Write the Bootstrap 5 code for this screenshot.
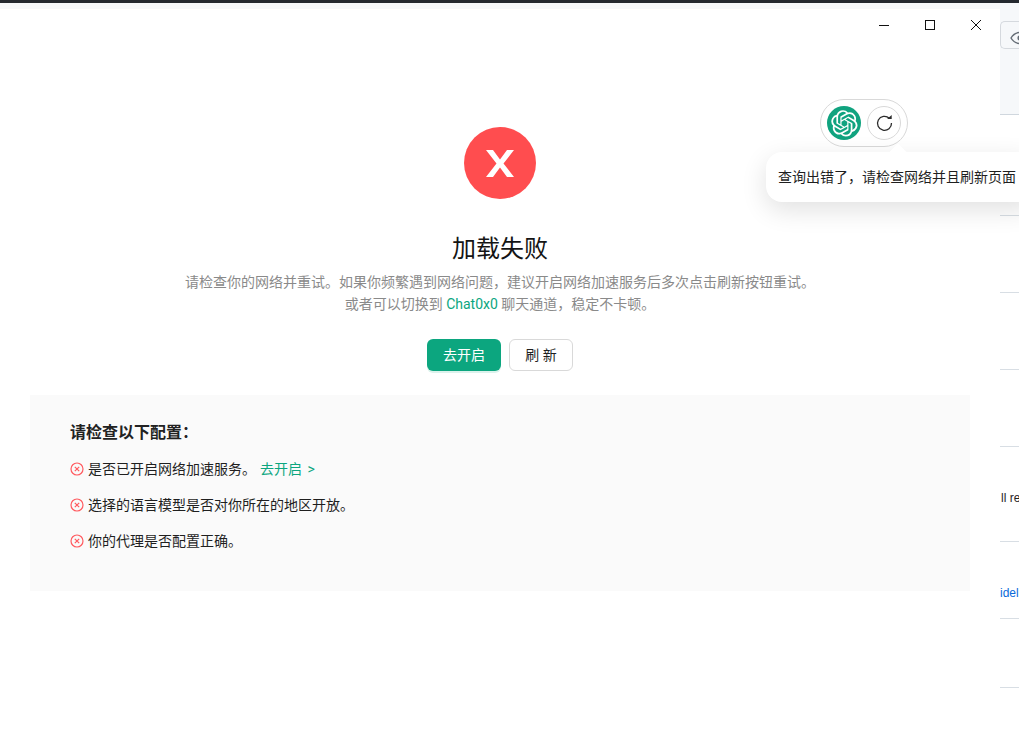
<!doctype html>
<html lang="zh"><head><meta charset="utf-8"><title>加载失败</title>
<link href="https://cdn.jsdelivr.net/npm/bootstrap@5.3.0/dist/css/bootstrap.min.css" rel="stylesheet">
<style>
html,body{height:729px;overflow:hidden}
body{font-family:Roboto,"Noto Sans CJK SC",sans-serif;background:#fff;color:#1f2328;position:relative}
.topline{height:3px;background:#24292f}
.stage{height:726px;background:#f6f8fa}
.dlg{width:1000px;margin-top:6px;height:720px;background:#fff;position:relative;z-index:1}
.rail{flex:1;background:#fff;position:relative;overflow:hidden;font-size:12px;font-family:"Liberation Sans",sans-serif}
.rail-head{height:112px;background:#f6f8fa;border-bottom:1px solid #d0d7de;padding-top:18px}
.eye{width:40px;height:28px;border:1px solid #d5d9de;border-radius:5px 0 0 5px;background:#f6f8fa;padding:6px 0 0 9px;border-right:0}
.rrow{border-bottom:1px solid #d8dee4;white-space:nowrap;display:flex;align-items:flex-end}
.r1{height:101px}.r2{height:77px}.r3{height:77px}.r4{height:77px}.r5{height:95px;padding-bottom:34px;padding-left:1px}.r6{height:77px;padding-bottom:16px;color:#0969da}.r7{height:69px}
.winbar{height:32px;padding-right:1px}
.winbtn{width:46px;height:32px;display:flex;align-items:center;justify-content:center}
.hero{padding-top:86px}
.fail{width:72px;height:72px;background:#ff4d4f;border-radius:50%;display:flex;align-items:center;justify-content:center}
.ttl{font-size:24px;font-weight:400;line-height:32px;margin:34px 0 0;color:#141414}
.sub{font-size:14px;line-height:22px;color:#8a8a8a;margin:6px 0 0}
.grn{color:#0ca67f;text-decoration:none}
.acts{margin-top:24px;gap:8px}
.go{width:74px;height:32px;background:#0ca67f;color:#fff;border:0;border-radius:6px;font-size:14px;padding:0;box-shadow:0 2px 0 rgba(12,166,127,.15)}
.rf{width:64px;height:32px;background:#fff;color:#1f1f1f;border:1px solid #d9d9d9;border-radius:6px;font-size:14px;padding:0}
.chk{margin:24px 30px 0;height:196px;background:#fafafa;padding:26px 40px}
.chk-t{font-size:16px;font-weight:700;line-height:24px;color:#222;margin-bottom:13px}
.chk-i{font-size:14px;line-height:22px;height:22px;margin-bottom:14px;color:#1f1f1f;gap:4px}
.chk-i svg{flex:none}
.ml-go{word-spacing:2px}
.pill{position:absolute;left:820px;top:90px;width:88px;height:48px;border:1px solid #d9d9d9;border-radius:24px;background:#fff;padding:6px;gap:6px;z-index:2}
.gpt{width:34px;height:34px;border-radius:50%;background:#10a37f;display:flex;align-items:center;justify-content:center}
.rld{width:34px;height:34px;border-radius:50%;border:1px solid #d9d9d9;display:flex;align-items:center;justify-content:center}
.tip{position:absolute;left:766px;top:143px;width:270px;height:50px;background:#fff;border-radius:16px;box-shadow:0 8px 26px rgba(0,0,0,.12);font-size:14px;line-height:50px;padding-left:12px;color:#1f1f1f;white-space:nowrap;z-index:3}
.tip::before{content:"";position:absolute;left:126px;top:-6px;width:12px;height:12px;background:#fff;transform:rotate(45deg)}
</style></head>
<body>
<div class="topline"></div>
<div class="d-flex stage">
<div class="dlg">
  <div class="winbar d-flex justify-content-end">
    <div class="winbtn"><svg width="12" height="12" viewBox="0 0 12 12"><path d="M1 6.500h10" stroke="#111" fill="none"/></svg></div>
    <div class="winbtn"><svg width="12" height="12" viewBox="0 0 12 12"><rect x="1.500" y="1.500" width="9" height="9" stroke="#111" fill="none"/></svg></div>
    <div class="winbtn"><svg width="12" height="12" viewBox="0 0 12 12"><path d="M1 1l10 10M11 1L1 11" stroke="#111" fill="none"/></svg></div>
  </div>
  <div class="hero d-flex flex-column align-items-center text-center">
    <div class="fail"><svg width="28" height="27" viewBox="0 0 28 27"><polygon fill="#fff" points="0,0 7,0 14,9.500 21,0 28,0 17.500,13.500 28,27 21,27 14,17.500 7,27 0,27 10.500,13.500"/></svg></div>
    <h1 class="ttl">加载失败</h1>
    <p class="sub">请检查你的网络并重试。如果你频繁遇到网络问题，建议开启网络加速服务后多次点击刷新按钮重试。<br>或者可以切换到 <a class="grn" href="#">Chat0x0</a> 聊天通道，稳定不卡顿。</p>
    <div class="d-flex acts"><button class="btn go">去开启</button><button class="btn rf">刷 新</button></div>
  </div>
  <div class="chk">
    <div class="chk-t">请检查以下配置：</div>
    <div class="chk-i d-flex align-items-center"><svg width="14" height="14" viewBox="0 0 14 14"><circle cx="7" cy="7" r="6" fill="none" stroke="#ff5a5f" stroke-width="1.2"/><path d="M4.800 4.800l4.400 4.400M9.200 4.800L4.800 9.200" stroke="#ff5a5f" stroke-width="1.2"/></svg><span>是否已开启网络加速服务。</span><a class="grn ml-go" href="#">去开启 &gt;</a></div>
    <div class="chk-i d-flex align-items-center"><svg width="14" height="14" viewBox="0 0 14 14"><circle cx="7" cy="7" r="6" fill="none" stroke="#ff5a5f" stroke-width="1.2"/><path d="M4.800 4.800l4.400 4.400M9.200 4.800L4.800 9.200" stroke="#ff5a5f" stroke-width="1.2"/></svg><span>选择的语言模型是否对你所在的地区开放。</span></div>
    <div class="chk-i d-flex align-items-center"><svg width="14" height="14" viewBox="0 0 14 14"><circle cx="7" cy="7" r="6" fill="none" stroke="#ff5a5f" stroke-width="1.2"/><path d="M4.800 4.800l4.400 4.400M9.200 4.800L4.800 9.200" stroke="#ff5a5f" stroke-width="1.2"/></svg><span>你的代理是否配置正确。</span></div>
  </div>
  <div class="pill d-flex align-items-center">
    <div class="gpt"><svg width="27" height="27" viewBox="0 0 41 41"><path fill="#fff" d="M37.500 16.700a9.960 9.960 0 0 0-.86-8.180 10.080 10.080 0 0 0-10.850-4.830A9.960 9.960 0 0 0 18.280.34a10.080 10.080 0 0 0-9.610 6.980 9.970 9.970 0 0 0-6.660 4.830 10.080 10.080 0 0 0 1.240 11.810 9.960 9.960 0 0 0 .86 8.180 10.080 10.080 0 0 0 10.850 4.830 9.960 9.960 0 0 0 7.500 3.350 10.080 10.080 0 0 0 9.620-6.980 9.970 9.970 0 0 0 6.660-4.830 10.080 10.080 0 0 0-1.240-11.810zM22.470 37.700a7.470 7.470 0 0 1-4.800-1.740l.24-.13 7.960-4.600a1.300 1.300 0 0 0 .65-1.130V18.870l3.370 1.940a.12.12 0 0 1 .06.09v9.300a7.500 7.500 0 0 1-7.480 7.500zM6.370 30.820a7.460 7.460 0 0 1-.9-5.020l.24.14 7.960 4.600a1.300 1.300 0 0 0 1.300 0l9.720-5.600v3.880a.12.12 0 0 1-.05.1l-8.050 4.650a7.500 7.500 0 0 1-10.220-2.750zM4.270 13.430a7.470 7.470 0 0 1 3.900-3.290v9.470a1.300 1.300 0 0 0 .65 1.120l9.720 5.610-3.370 1.940a.12.12 0 0 1-.11.01l-8.050-4.650a7.500 7.500 0 0 1-2.740-10.210zm27.650 6.440l-9.720-5.610 3.370-1.940a.12.12 0 0 1 .11-.01l8.050 4.650a7.490 7.490 0 0 1-1.160 13.500v-9.470a1.300 1.300 0 0 0-.65-1.120zm3.350-5.050l-.24-.14-7.960-4.600a1.300 1.300 0 0 0-1.300 0l-9.720 5.600v-3.880a.12.12 0 0 1 .05-.1l8.050-4.650a7.490 7.490 0 0 1 11.120 7.770zM14.200 21.750l-3.370-1.940a.12.12 0 0 1-.06-.09v-9.300a7.490 7.490 0 0 1 12.280-5.750l-.24.13-7.960 4.600a1.300 1.300 0 0 0-.65 1.130zm1.830-3.950l4.330-2.500 4.330 2.500v5l-4.330 2.500-4.330-2.500z"/></svg></div>
    <div class="rld"><svg width="18" height="18" viewBox="-0.500 0 18 18"><path d="M13.800 4.200a7 7 0 1 0 2.200 4.800" fill="none" stroke="#2b2b2b" stroke-width="1.300"/><path d="M11.600 5h4.600V1z" fill="#2b2b2b"/></svg></div>
  </div>
  <div class="tip">查询出错了，请检查网络并且刷新页面</div>
</div>
<div class="rail">
  <div class="rail-head"><div class="eye"><svg width="20" height="14" viewBox="0 0 20 14"><path d="M1 7c2-3.500 5.500-5.500 9-5.500s7 2 9 5.500c-2 3.500-5.500 5.500-9 5.500s-7-2-9-5.500z" fill="none" stroke="#656d76" stroke-width="1.400"/><circle cx="10" cy="7" r="2.600" fill="#656d76"/></svg></div></div>
  <div class="rrow r1"></div><div class="rrow r2"></div><div class="rrow r3"></div><div class="rrow r4"></div>
  <div class="rrow r5">ll re</div><div class="rrow r6">idel</div><div class="rrow r7"></div>
</div>
</div>
</body></html>
